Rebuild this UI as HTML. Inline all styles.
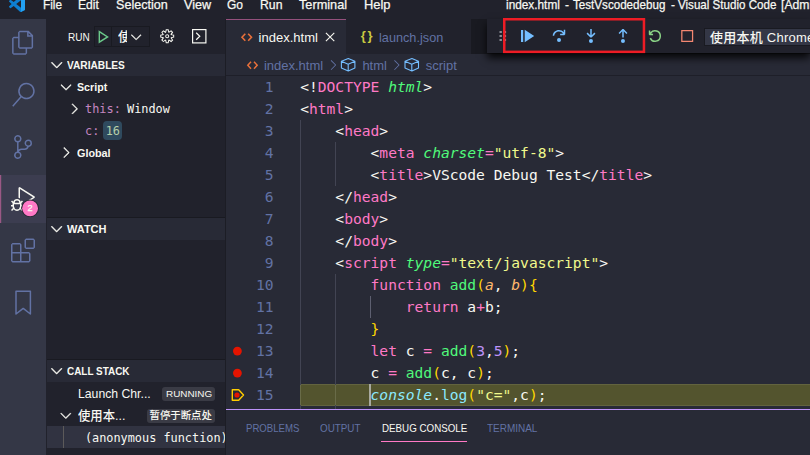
<!DOCTYPE html>
<html lang="zh">
<head>
<meta charset="utf-8">
<title>index.html - TestVscodedebug - Visual Studio Code</title>
<style>
*{box-sizing:border-box;margin:0;padding:0}
html,body{width:810px;height:455px;overflow:hidden;background:#282a36}
body{position:relative;font-family:"Liberation Sans","Noto Sans CJK SC",sans-serif;font-size:13px;color:#f8f8f2}
.abs,.t{position:absolute}
.t{white-space:pre;line-height:1;transform-origin:0 0}
.mono{font-family:"DejaVu Sans Mono","Liberation Mono","Noto Sans CJK SC",monospace}
svg{position:absolute;overflow:visible}
/* regions */
#titlebar{left:0;top:0;width:810px;height:19px;background:#21222c}
#activity{left:0;top:19px;width:46px;height:436px;background:#343746}
#sidebar{left:46px;top:19px;width:180px;height:436px;background:#21222c}
#tabs{left:226px;top:19px;width:584px;height:35px;background:#191a21}
#crumbs{left:226px;top:54px;width:584px;height:22px;background:#282a36}
#editor{left:226px;top:76px;width:584px;height:333px;background:#282a36;overflow:hidden}
#panel{left:226px;top:409px;width:584px;height:46px;background:#282a36;border-top:1px solid #bd93f9}
.menu{top:-2px;font-size:13px;color:#f8f8f2;-webkit-text-stroke:.25px #f8f8f2}
.hdr{left:47px;width:178px;height:22px;background:#282a36}
.hdr .t{margin-left:-1px}.hdr .t,.b11{font-size:11px;font-weight:bold;color:#f8f8f2}
.ln{position:absolute;left:0;width:47.5px;text-align:right;color:#6272a4;font-size:14.61px;line-height:22px;height:22px}
.code{position:absolute;left:74.2px;font-size:14.61px;line-height:22px;height:22px;white-space:pre;color:#f8f8f2}
.p{color:#ff79c6}.g{color:#50fa7b}.gi{color:#50fa7b;font-style:italic}.y{color:#f1fa8c}.q{color:#e9f284}
.o{color:#ffb86c;font-style:italic}.v{color:#bd93f9}.ci{color:#8be9fd;font-style:italic}.c{color:#8be9fd}.yb{color:#ffd700}
.guide{position:absolute;width:1px;background:#424453}
.ptab{top:13px;font-size:11px;color:#6272a4}
</style>
</head>
<body>
<!-- title bar -->
<div id="titlebar" class="abs">
  <svg style="left:8.800px;top:-4.200px" width="16" height="16" viewBox="0 0 100 100"><path fill="#0e7fd1" fill-rule="evenodd" d="M70.900 99.300a6.200 6.200 0 0 0 4.960-.19L96.400 89.200A6.250 6.250 0 0 0 100 83.600V16.400a6.250 6.250 0 0 0-3.500-5.600L75.900.900a6.200 6.200 0 0 0-7.100 1.200L29.400 38 12.200 25a4.200 4.200 0 0 0-5.300.200L1.400 30.200a4.200 4.200 0 0 0 0 6.200L16.200 50 1.400 63.600a4.200 4.200 0 0 0 0 6.200l5.500 5a4.200 4.200 0 0 0 5.300.200l17.200-13 39.400 35.900a6.200 6.200 0 0 0 2.100 1.400zM75 27.300L45.100 50 75 72.700z"/><path fill="#23a1f2" d="M75 .700L96.500 10.800Q100 12.500 100 16.400V83.600Q100 87.500 96.400 89.200L75 99.400z"/></svg>
  <span class="t menu" style="transform:scaleX(0.909);left:42.6px">File</span>
  <span class="t menu" style="transform:scaleX(0.933);left:77.7px">Edit</span>
  <span class="t menu" style="transform:scaleX(0.968);left:115.7px">Selection</span>
  <span class="t menu" style="transform:scaleX(0.968);left:184px">View</span>
  <span class="t menu" style="transform:scaleX(0.925);left:227px">Go</span>
  <span class="t menu" style="transform:scaleX(0.941);left:259.6px">Run</span>
  <span class="t menu" style="transform:scaleX(0.978);left:299px">Terminal</span>
  <span class="t menu" style="transform:scaleX(0.993);left:364px">Help</span>
  <span class="t menu" style="transform:scaleX(0.909);left:505.8px">index.html</span>
  <span class="t menu" style="transform:scaleX(0.92);left:564.9px">-</span>
  <span class="t menu" style="transform:scaleX(0.894);left:573px">TestVscodedebug</span>
  <span class="t menu" style="transform:scaleX(0.92);left:671.2px">-</span>
  <span class="t menu" style="transform:scaleX(0.892);left:677.800px">Visual Studio Code</span>
  <span class="t menu" style="transform:scaleX(0.940);left:781.300px">[Administrator]</span>
</div>

<!-- activity bar -->
<div id="activity" class="abs">
  <div class="abs" style="left:0;top:156px;width:46px;height:48px;background:#3c3d50"></div>
  <div class="abs" style="left:0;top:156px;width:2px;height:48px;background:linear-gradient(90deg,#9a5886 0,#9a5886 50%,#4f4358 50%,#4f4358 100%)"></div>
</div>

<!-- sidebar -->
<div id="sidebar" class="abs"></div>
<div class="abs" style="left:225px;top:19px;width:1px;height:436px;background:#1c1d25"></div>
<span class="t" style="transform:scaleX(0.912);left:67.500px;top:31.700px;font-size:11px;color:#f8f8f2">RUN</span>
<div class="abs" style="left:94px;top:26px;width:56px;height:21px;border:1px solid #191a21"></div>
<div class="abs" style="left:111px;top:27px;width:1px;height:19px;background:#191a21"></div>
<div class="abs" style="left:118px;top:29px;width:9px;height:16px;overflow:hidden"><span class="t" style="left:0;top:1px;font-size:13px;font-weight:500">使用本机 Chrome 调试</span></div>

<div class="abs hdr" style="top:54px"><span class="t" style="transform:scaleX(0.922);left:21px;top:5.5px">VARIABLES</span></div>
<span class="t b11" style="transform:scaleX(0.968);left:77px;top:81.5px">Script</span>
<span class="t mono" style="left:85.100px;top:104px;font-size:11.870px;color:#c586c0">this:</span>
<span class="t mono" style="left:127px;top:104px;font-size:11.87px;color:#f8f8f2">Window</span>
<span class="t mono" style="left:85.100px;top:126px;font-size:11.870px;color:#c586c0">c:</span>
<div class="abs" style="left:103px;top:121px;width:19px;height:19px;background:#2f4a5e;border-radius:4px"></div>
<span class="t mono" style="left:105.700px;top:126px;font-size:11.87px;color:#b5cea8">16</span>
<span class="t b11" style="transform:scaleX(0.982);left:77px;top:147.5px">Global</span>

<div class="abs hdr" style="top:217px;height:23px;border-top:1px solid #191a21"><span class="t" style="left:21px;top:5.500px">WATCH</span></div>
<div class="abs hdr" style="top:359px;height:23px;border-top:1px solid #191a21"><span class="t" style="transform:scaleX(0.902);left:21px;top:5.500px">CALL STACK</span></div>

<span class="t" style="transform:scaleX(0.940);left:77.7px;top:387px;font-size:13px">Launch Chr...</span>
<div class="abs" style="left:162px;top:387px;width:52.700px;height:14px;background:#3a3b45;border-radius:3px"></div>
<span class="t" style="left:165.600px;top:389.400px;font-size:9.700px;color:#f8f8f2;transform:scaleX(1.02)">RUNNING</span>
<span class="t" style="left:77.700px;top:408.500px;font-size:13px;font-weight:500;transform:scaleX(.95)">使用本...</span>
<div class="abs" style="left:147.200px;top:409px;width:67.500px;height:14px;background:#3a3b45;border-radius:3px"></div>
<span class="t" style="left:149.500px;top:410.800px;font-size:10.400px;font-weight:500;color:#f8f8f2">暂停于断点处</span>
<div class="abs" style="left:47px;top:426px;width:178px;height:22px;background:#313341;overflow:hidden">
  <div class="abs" style="left:16px;top:0;width:1px;height:22px;background:#5c5a5a"></div>
  <span class="t mono" style="left:37.900px;top:7px;font-size:11.870px;color:#f8f8f2">(anonymous function)</span>
</div>

<!-- tabs -->
<div id="tabs" class="abs">
  <div class="abs" style="left:0;top:0;width:120px;height:35px;background:#282a36;border-top:1px solid #94507c"></div>
  <div class="abs" style="left:120px;top:0;width:125px;height:35px;background:#21222c"></div>
  <span class="t" style="left:32.6px;top:11.500px;font-size:13px;color:#f8f8f2">index.html</span>
  <span class="t" style="transform:scaleX(0.977);left:152.6px;top:11.500px;font-size:13px;color:#6272a4">launch.json</span>
</div>

<!-- breadcrumbs -->
<div id="crumbs" class="abs">
  <div class="abs" style="left:0;top:21px;width:584px;height:1px;background:#1e1f29"></div>
  <span class="t" style="left:37.9px;top:4.500px;font-size:13px;color:#6272a4">index.html</span>
  <span class="t" style="left:136.4px;top:4.500px;font-size:13px;color:#6272a4">html</span>
  <span class="t" style="left:199.7px;top:4.500px;font-size:13px;color:#6272a4">script</span>
</div>

<!-- editor -->
<div id="editor" class="abs mono">
  <div class="abs" style="left:74px;top:308px;width:510px;height:22px;background:#53542e;border-top:1px solid #62633f;border-bottom:1px solid #62633f"></div>
  <div class="guide" style="left:74px;top:44px;height:289px"></div>
  <div class="guide" style="left:109px;top:66px;height:44px"></div>
  <div class="guide" style="left:109px;top:198px;height:135px"></div>
  <div class="guide" style="left:144px;top:220px;height:22px;background:#5d5f70"></div>
  <div class="abs" style="left:74px;top:309px;width:1px;height:20px;background:#696b48"></div>
  <div class="abs" style="left:109px;top:309px;width:1px;height:20px;background:#696b48"></div>
  <div class="abs" style="left:143px;top:308px;width:2px;height:22px;background:#a9aaa0"></div>

  <div class="ln" style="top:0">1</div><div class="code" style="top:0">&lt;!<span class="p">DOCTYPE</span> <span class="gi">html</span>&gt;</div>
  <div class="ln" style="top:22px">2</div><div class="code" style="top:22px">&lt;<span class="p">html</span>&gt;</div>
  <div class="ln" style="top:44px">3</div><div class="code" style="top:44px">    &lt;<span class="p">head</span>&gt;</div>
  <div class="ln" style="top:66px">4</div><div class="code" style="top:66px">        &lt;<span class="p">meta</span> <span class="gi">charset</span><span class="p">=</span><span class="q">"</span><span class="y">utf-8</span><span class="q">"</span>&gt;</div>
  <div class="ln" style="top:88px">5</div><div class="code" style="top:88px">        &lt;<span class="p">title</span>&gt;VScode Debug Test&lt;/<span class="p">title</span>&gt;</div>
  <div class="ln" style="top:110px">6</div><div class="code" style="top:110px">    &lt;/<span class="p">head</span>&gt;</div>
  <div class="ln" style="top:132px">7</div><div class="code" style="top:132px">    &lt;<span class="p">body</span>&gt;</div>
  <div class="ln" style="top:154px">8</div><div class="code" style="top:154px">    &lt;/<span class="p">body</span>&gt;</div>
  <div class="ln" style="top:176px">9</div><div class="code" style="top:176px">    &lt;<span class="p">script</span> <span class="gi">type</span><span class="p">=</span><span class="q">"</span><span class="y">text/javascript</span><span class="q">"</span>&gt;</div>
  <div class="ln" style="top:198px">10</div><div class="code" style="top:198px">        <span class="p">function</span> <span class="g">add</span><span class="yb">(</span><span class="o">a</span>, <span class="o">b</span><span class="yb">){</span></div>
  <div class="ln" style="top:220px">11</div><div class="code" style="top:220px">            <span class="p">return</span> a<span class="p">+</span>b;</div>
  <div class="ln" style="top:242px">12</div><div class="code" style="top:242px">        <span class="yb">}</span></div>
  <div class="ln" style="top:264px">13</div><div class="code" style="top:264px">        <span class="p">let</span> c <span class="p">=</span> <span class="g">add</span><span class="yb">(</span><span class="v">3</span>,<span class="v">5</span><span class="yb">)</span>;</div>
  <div class="ln" style="top:286px">14</div><div class="code" style="top:286px">        c <span class="p">=</span> <span class="g">add</span><span class="yb">(</span>c, c<span class="yb">)</span>;</div>
  <div class="ln" style="top:308px">15</div><div class="code" style="top:308px">        <span class="ci">console</span>.<span class="c">log</span><span class="yb">(</span><span class="q">"</span><span class="y">c=</span><span class="q">"</span>,c<span class="yb">)</span>;</div>
</div>

<!-- panel -->
<div id="panel" class="abs">
  <span class="t ptab" style="transform:scaleX(0.874);left:20.2px">PROBLEMS</span>
  <span class="t ptab" style="transform:scaleX(0.894);left:94px">OUTPUT</span>
  <span class="t ptab" style="transform:scaleX(0.889);left:155.6px;color:#f8f8f2">DEBUG CONSOLE</span>
  <span class="t ptab" style="transform:scaleX(0.906);left:261px">TERMINAL</span>
  <div class="abs" style="left:155px;top:31px;width:86px;height:1px;background:#ff79c6"></div>
</div>

<!-- debug toolbar -->
<div class="abs" style="left:487px;top:19px;width:323px;height:34px;background:#21222c;box-shadow:0 5px 8px rgba(0,0,0,.85)"></div>
<div class="abs" style="left:703.500px;top:28px;width:107px;height:17.500px;background:#343746;border:1px solid #191a21;overflow:hidden"><span class="t" style="left:5.500px;top:2px;font-size:13px;color:#f8f8f2;font-weight:500;letter-spacing:.25px">使用本机 Chrome 调试</span></div>

<!-- icons overlay -->
<svg id="icons" style="left:0;top:0" width="810" height="455" viewBox="0 0 810 455">
  <g fill="#6272a4">
    <path transform="translate(11.1 30.8)" d="M17.5 0h-9L7 1.5V6H2.5L1 7.5v15.07L2.5 24h12.07L16 22.57V18h4.7l1.3-1.43V4.5L17.5 0zm0 2.12l2.38 2.38H17.5V2.12zm-3 20.38h-12v-15H7v9.07L8.500 18h6v4.5zm6-6h-12v-15H16V6h4.5v10.5z"/>
    <path transform="translate(11.2 82.8)" d="M15.25 0a8.25 8.25 0 0 0-6.18 13.72L1 22.88l1.12 1 8.05-9.12A8.251 8.251 0 1 0 15.25.01V0zm0 15a6.75 6.75 0 1 1 0-13.5 6.75 6.75 0 0 1 0 13.5z"/>
    <path transform="translate(11 135)" d="M21.007 8.222A3.738 3.738 0 0 0 15.045 5.2a3.737 3.737 0 0 0 1.156 6.583 2.988 2.988 0 0 1-2.668 1.67h-2.99a4.456 4.456 0 0 0-2.989 1.165V7.4a3.737 3.737 0 1 0-1.494 0v9.117a3.776 3.776 0 1 0 1.816.099 2.99 2.99 0 0 1 2.668-1.667h2.99a4.484 4.484 0 0 0 4.223-3.039 3.736 3.736 0 0 0 3.25-3.687zM4.565 3.738a2.242 2.242 0 1 1 4.484 0 2.242 2.242 0 0 1-4.484 0zm4.484 16.441a2.242 2.242 0 1 1-4.484 0 2.242 2.242 0 0 1 4.484 0zm8.221-9.715a2.242 2.242 0 1 1 0-4.485 2.242 2.242 0 0 1 0 4.485z"/>
    <path transform="translate(11 238.5)" d="M13.5 1.5L15 0h7.5L24 1.5V9l-1.5 1.5H15L13.5 9V1.5zm1.5 0V9h7.5V1.5H15zM0 15V6l1.5-1.500H9L10.5 6v7.5H18l1.5 1.5v7.5L18 24H1.5L0 22.5V15zm9-1.5V6H1.5v7.5H9zM9 15H1.5v7.5H9V15zm1.500 7.5H18V15h-7.5v7.5z"/>
  </g>
  <path d="M16 291.200h14.400v22.800l-7.200-5.600-7.200 5.600z" fill="none" stroke="#6272a4" stroke-width="1.500" stroke-linejoin="round"/>
  <path transform="translate(11 187)" fill="#f8f8f2" d="M10.94 13.5l-1.32 1.32a3.73 3.730 0 0 0-7.240 0L1.060 13.500 0 14.560l1.720 1.720-.22.22V18H0v1.500h1.500v.08c.077.489.214.966.41 1.420L0 22.940 1.060 24l1.650-1.650A4.308 4.308 0 0 0 6 24a4.310 4.310 0 0 0 3.290-1.650L10.940 24 12 22.940 10.090 21c.198-.464.336-.951.41-1.450v-.1H12V18h-1.500v-1.500l-.22-.22L12 14.560l-1.060-1.060zM6 13.500a2.250 2.250 0 0 1 2.250 2.250h-4.500A2.250 2.250 0 0 1 6 13.500zm3 6a3.330 3.330 0 0 1-3 3 3.330 3.330 0 0 1-3-3v-2.250h6v2.250zm14.760-9.900v1.260L13.500 17.370V15.600l8.500-5.370L9 2v9.460a5.070 5.070 0 0 0-1.500-.72V.63L8.640 0l15.120 9.600z"/>
  <circle cx="30.100" cy="208.300" r="8.800" fill="#262732"/>
  <circle cx="30.100" cy="208.300" r="7.900" fill="#ff79c6"/>
  <text x="30" y="211.300" font-size="9.300" font-family="Liberation Sans, sans-serif" fill="#f8f8f2" stroke="#f8f8f2" stroke-width=".25" text-anchor="middle">2</text>

  <!-- twisties -->
  <g fill="#f8f8f2" stroke="#f8f8f2" stroke-width=".4">
    <path transform="translate(47.970 55.800) scale(1.100)" d="M7.976 10.072l4.357-4.357.62.618L8.284 11h-.618L3 6.333l.619-.618 4.357 4.357z"/>
    <path transform="translate(57.670 78.480) scale(1.050)" d="M7.976 10.072l4.357-4.357.62.618L8.284 11h-.618L3 6.333l.619-.618 4.357 4.357z"/>
    <path transform="translate(65.880 100.430) scale(1.050)" d="M10.072 8.024L5.715 3.667l.618-.62L11 7.716v.618L6.333 13l-.618-.619 4.357-4.357z"/>
    <path transform="translate(57.580 144.130) scale(1.050)" d="M10.072 8.024L5.715 3.667l.618-.62L11 7.716v.618L6.333 13l-.618-.619 4.357-4.357z"/>
    <path transform="translate(47.870 219.800) scale(1.100)" d="M7.976 10.072l4.357-4.357.62.618L8.284 11h-.618L3 6.333l.619-.618 4.357 4.357z"/>
    <path transform="translate(47.870 361.800) scale(1.100)" d="M7.976 10.072l4.357-4.357.62.618L8.284 11h-.618L3 6.333l.619-.618 4.357 4.357z"/>
    <path transform="translate(57.420 406.900) scale(1.050)" d="M7.976 10.072l4.357-4.357.62.618L8.284 11h-.618L3 6.333l.619-.618 4.357 4.357z"/>
    <path transform="translate(128.200 28.850)" d="M7.976 10.072l4.357-4.357.62.618L8.284 11h-.618L3 6.333l.619-.618 4.357 4.357z"/>
  </g>
  <!-- run header icons -->
  <path d="M99.300 31.600v10.600l8.300-5.300z" fill="none" stroke="#6bc98a" stroke-width="1.400" stroke-linejoin="miter"/>
  <path transform="translate(159.200 28.200)" fill="#f8f8f2" d="M9.100 4.400L8.600 2H7.400l-.5 2.400-.7.300-2-1.300-.9.800 1.300 2-.2.700-2.400.500v1.200l2.400.500.3.800-1.300 2 .8.800 2-1.300.8.300.4 2.300h1.200l.5-2.400.8-.3 2 1.300.8-.8-1.300-2 .3-.8 2.300-.4V7.400l-2.400-.5-.3-.8 1.300-2-.8-.8-2 1.300-.7-.2zM9.400 1l.5 2.400L12 2.100l2 2-1.400 2.100 2.400.4v2.800l-2.400.5L14 12l-2 2-2.100-1.400-.5 2.400H6.600l-.5-2.400L4 13.900l-2-2 1.400-2.100L1 9.400V6.600l2.400-.5L2.100 4l2-2 2.100 1.400.4-2.400h2.800zm.6 7c0 1.100-.9 2-2 2s-2-.9-2-2 .9-2 2-2 2 .9 2 2zM8 9c.6 0 1-.4 1-1s-.4-1-1-1-1 .4-1 1 .4 1 1 1z"/>
  <rect x="192.600" y="29.600" width="13.300" height="13.300" fill="none" stroke="#f8f8f2" stroke-width="1.200"/>
  <path d="M196.200 32.800l3.600 3.500-3.600 3.500" fill="none" stroke="#f8f8f2" stroke-width="1.200"/>
  <!-- tab icons -->
  <path d="M245.300 33.800l-3.300 3.500 3.300 3.500M248.200 33.800l3.300 3.500-3.300 3.500" fill="none" stroke="#e8703a" stroke-width="1.600"/>
  <path d="M251 61.700l-3.200 3.500 3.200 3.500M254 61.700l3.200 3.500-3.200 3.500" fill="none" stroke="#e8703a" stroke-width="1.500"/>
  <path d="M325.900 32.800l8.400 8.400M334.300 32.800l-8.400 8.400" fill="none" stroke="#f8f8f2" stroke-width="1.100"/>
  <text x="360.700" y="39.600" font-size="13" font-weight="bold" letter-spacing="1.800" font-family="Liberation Sans, sans-serif" fill="#cbcb41">{}</text>
  <!-- breadcrumb chevrons & cubes -->
  <g fill="#6272a4">
    <path transform="translate(325 57)" d="M10.072 8.024L5.715 3.667l.618-.62L11 7.716v.618L6.333 13l-.618-.619 4.357-4.357z"/>
    <path transform="translate(388.400 57)" d="M10.072 8.024L5.715 3.667l.618-.62L11 7.716v.618L6.333 13l-.618-.619 4.357-4.357z"/>
  </g>
  <g fill="none" stroke="#75beff" stroke-width="1.100" stroke-linejoin="round">
    <path d="M341.400 61.300l6.900-2.800 6.600 2.800v6.700l-6.600 3-6.900-3zM341.400 61.300l6.800 2.900 6.700-2.900M348.200 64.200v6.800"/>
    <path d="M405 61.300l6.900-2.800 6.600 2.800v6.700l-6.600 3-6.900-3zM405 61.300l6.800 2.900 6.700-2.900M411.800 64.200v6.800"/>
  </g>
  <!-- breakpoints -->
  <circle cx="237.400" cy="351.100" r="4.400" fill="#e51400"/>
  <circle cx="237.400" cy="373.100" r="4.400" fill="#e51400"/>
  <path d="M232.300 389.800h6.400l4.800 5.200-4.800 5.200h-6.400z" fill="none" stroke="#ffcc00" stroke-width="1.400" stroke-linejoin="round"/>
  <circle cx="237" cy="395" r="2.600" fill="#e51400"/>
  <!-- debug toolbar -->
  <g fill="#8a8b93">
    <rect x="499.500" y="31" width="2.400" height="2"/><rect x="503.700" y="31" width="2.400" height="2"/>
    <rect x="499.500" y="35" width="2.400" height="2"/><rect x="503.700" y="35" width="2.400" height="2"/>
    <rect x="499.500" y="39" width="2.400" height="2"/><rect x="503.700" y="39" width="2.400" height="2"/>
  </g>
  <g fill="#75beff">
    <path d="M521 29.900h2.200v12.200h-2.200zM524.700 29.800v12.400l9.500-6.200z"/>
    <path transform="translate(551 28)" d="M14.250 5.750v-4h-1.500v2.542c-1.145-1.359-2.911-2.209-4.840-2.209-3.177 0-5.920 2.307-6.160 5.398l-.02.269h1.501l.022-.226c.212-2.195 2.202-3.940 4.656-3.940 1.736 0 3.244.875 4.050 2.166h-2.830v1.500h4.163l.962-.975-.004-.525zM8 14a2 2 0 1 1 0-4 2 2 0 0 1 0 4z"/>
    <path transform="translate(583 28)" d="M8 9.532h.542l3.905-3.905-1.061-1.060-2.637 2.610V1H7.251v6.177l-2.637-2.610-1.061 1.060 3.905 3.905H8zm1.956 3.481a2 2 0 1 1-4 0 2 2 0 0 1 4 0z"/>
    <path transform="translate(615 28)" d="M8 1h-.542L3.553 4.905l1.061 1.060 2.637-2.610v6.177h1.498V3.355l2.637 2.610 1.061-1.060L8.542 1H8zm1.956 12.013a2 2 0 1 1-4 0 2 2 0 0 1 4 0z"/>
  </g>
  <path transform="translate(646.800 28)" fill="#89d185" d="M12.750 8a4.500 4.500 0 0 1-8.610 1.834l-1.391.565A6.001 6.001 0 0 0 14.250 8 6 6 0 0 0 3.500 4.334V2.500H2v4l.75.75h3.500v-1.500H4.352A4.500 4.500 0 0 1 12.750 8z"/>
  <path transform="translate(679.200 28)" fill="#f48771" d="M2 2v12h12V2H2zm10.750 10.750h-9.500v-9.500h9.500v9.500z"/>
  <rect x="504.250" y="19.250" width="139.700" height="32.600" fill="none" stroke="#ee1c25" stroke-width="2.500"/>
</svg>
</body>
</html>
